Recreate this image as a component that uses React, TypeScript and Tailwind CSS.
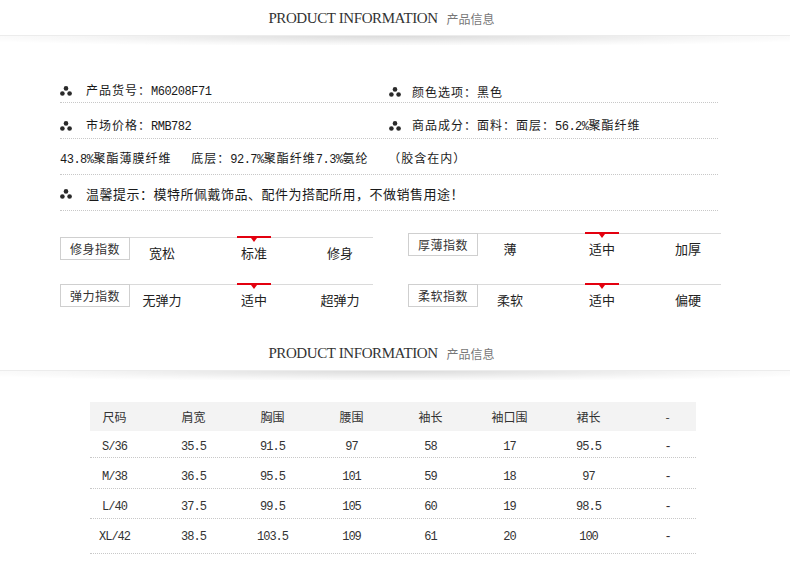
import React from "react";

const CJK = "font-['Noto_Sans_CJK_SC',sans-serif]";

function Mixed({ text, latin }: { text: string; latin: string }) {
  const parts = text.split(/([\x20-\x7E]+)/).filter((p) => p.length > 0);
  return (
    <>
      {parts.map((p, i) =>
        /^[\x20-\x7E]+$/.test(p) ? (
          <span key={i} className={latin}>
            {p}
          </span>
        ) : (
          <span key={i}>{p}</span>
        )
      )}
    </>
  );
}

function Trefoil() {
  return (
    <svg width="12" height="10" viewBox="0 0 12 10" className="shrink-0">
      <circle cx="6" cy="2.4" r="2.3" fill="#2a2a2a" />
      <circle cx="2.4" cy="7.5" r="2.3" fill="#2a2a2a" />
      <circle cx="9.6" cy="7.5" r="2.3" fill="#2a2a2a" />
    </svg>
  );
}

function Header() {
  return (
    <>
      <div className="h-[35px] flex items-center justify-center pr-[27px] pt-[2px]">
        <span className="font-['Liberation_Serif',serif] text-[15px] tracking-[-0.4px] text-[#333]">
          PRODUCT INFORMATION
        </span>
        <span className={`${CJK} ml-[9px] text-[12px] text-[#777]`}>产品信息</span>
      </div>
      <div className="h-[10px] border-t border-[#ececec] bg-[radial-gradient(ellipse_at_top,rgba(0,0,0,0.14),rgba(0,0,0,0.03)_60%,rgba(0,0,0,0)_85%)]" />
    </>
  );
}

const LATIN = "font-['Liberation_Mono',monospace] text-[12px] tracking-[-0.5px]";

function Scale({
  label,
  opts,
  rowH,
}: {
  label: string;
  opts: [string, string, string];
  rowH: string;
}) {
  return (
    <div className={`flex items-start ${rowH}`}>
      <div
        className={`${CJK} w-[70px] h-[23px] border border-[#cfcfcf] flex items-center justify-center text-[12px] tracking-[0.5px] text-[#333]`}
      >
        {label}
      </div>
      <div className="relative w-[243px] border-t border-[#dadada] flex">
        <div className="absolute top-[-2px] left-[107px] w-[34px] h-[2px] bg-[#e3000f]" />
        <div className="absolute top-[0px] left-[121px] w-0 h-0 border-l-[3px] border-r-[3px] border-t-[4px] border-l-transparent border-r-transparent border-t-[#e3000f]" />
        <div className={`${CJK} w-[64px] mt-[5px] text-center text-[13px] leading-[20px] text-[#222]`}>{opts[0]}</div>
        <div className={`${CJK} w-[120px] mt-[5px] text-center text-[13px] leading-[20px] text-[#222]`}>{opts[1]}</div>
        <div className={`${CJK} w-[52px] mt-[5px] text-center text-[13px] leading-[20px] text-[#222]`}>{opts[2]}</div>
      </div>
    </div>
  );
}

const TLATIN = "font-['Liberation_Mono',monospace] text-[12px] tracking-[-1px]";

const sizeRows: { cells: string[]; h: string; pt: string }[] = [
  { cells: ["S/36", "35.5", "91.5", "97", "58", "17", "95.5", "-"], h: "h-[27px]", pt: "pt-[8px]" },
  { cells: ["M/38", "36.5", "95.5", "101", "59", "18", "97", "-"], h: "h-[31px]", pt: "pt-[11px]" },
  { cells: ["L/40", "37.5", "99.5", "105", "60", "19", "98.5", "-"], h: "h-[30px]", pt: "pt-[10px]" },
  { cells: ["XL/42", "38.5", "103.5", "109", "61", "20", "100", "-"], h: "h-[35px]", pt: "pt-[10px]" },
];

const headCells = ["尺码", "肩宽", "胸围", "腰围", "袖长", "袖口围", "裙长", "-"];

export default function App() {
  return (
    <div className="w-[790px] h-[578px] bg-white overflow-hidden text-[#333]">
      <Header />

      {/* info rows */}
      <div className={`${CJK} mt-[22px] ml-[60px] w-[658px] text-[12px] tracking-[1px] text-[#1a1a1a]`}>
        <div className="h-[36px] flex items-end border-b border-dotted border-[#c8c8c8]">
          <div className="w-[329px] flex items-center leading-[20px]">
            <Trefoil />
            <span className="ml-[14px]">
              <Mixed text="产品货号：M60208F71" latin={LATIN} />
            </span>
          </div>
          <div className="flex items-center leading-[20px]">
            <Trefoil />
            <span className="ml-[11px]">颜色选项：黑色</span>
          </div>
        </div>
        <div className="h-[36px] flex items-end pb-[1px] border-b border-dotted border-[#c8c8c8]">
          <div className="w-[329px] flex items-center leading-[20px]">
            <Trefoil />
            <span className="ml-[14px]">
              <Mixed text="市场价格：RMB782" latin={LATIN} />
            </span>
          </div>
          <div className="flex items-center leading-[20px]">
            <Trefoil />
            <span className="ml-[11px]">
              <Mixed text="商品成分：面料：面层：56.2%聚酯纤维" latin={LATIN} />
            </span>
          </div>
        </div>
        <div className="h-[36px] flex items-end pb-[4px] border-b border-dotted border-[#c8c8c8]">
          <div className="leading-[20px] whitespace-pre">
            <Mixed text="43.8%聚酯薄膜纤维　 底层：92.7%聚酯纤维7.3%氨纶　 （胶含在内）" latin={LATIN} />
          </div>
        </div>
        <div className="h-[36px] flex items-end pb-[6px] border-b border-dotted border-[#c8c8c8]">
          <div className="flex items-center leading-[20px]">
            <Trefoil />
            <span className="ml-[14px] text-[13px] tracking-[0.5px]">
              温馨提示：模特所佩戴饰品、配件为搭配所用，不做销售用途！
            </span>
          </div>
        </div>
      </div>

      {/* index scales */}
      <div className="mt-[22px] ml-[60px] h-[102px] flex">
        <div className="pt-[4px] w-[313px]">
          <Scale label="修身指数" opts={["宽松", "标准", "修身"]} rowH="h-[47px]" />
          <Scale label="弹力指数" opts={["无弹力", "适中", "超弹力"]} rowH="h-[30px]" />
        </div>
        <div className="ml-[35px] w-[313px]">
          <Scale label="厚薄指数" opts={["薄", "适中", "加厚"]} rowH="h-[51px]" />
          <Scale label="柔软指数" opts={["柔软", "适中", "偏硬"]} rowH="h-[30px]" />
        </div>
      </div>

      <Header />

      {/* size table */}
      <div className="mt-[22px] ml-[90px] w-[606px]">
        <div className="h-[29px] bg-[#f3f3f3] flex items-center">
          <div className={`${CJK} -ml-[15px] grid grid-cols-[repeat(8,79px)] text-[12px] text-[#333]`}>
            {headCells.map((c, i) => (
              <div key={i} className="text-center">
                {c}
              </div>
            ))}
          </div>
        </div>
        {sizeRows.map((r, ri) => (
          <div key={ri} className={`${r.h} ${r.pt} border-b border-dotted border-[#c8c8c8]`}>
            <div className={`${TLATIN} -ml-[15px] grid grid-cols-[repeat(8,79px)] leading-[16px] text-[#333]`}>
              {r.cells.map((c, i) => (
                <div key={i} className="text-center">
                  {c}
                </div>
              ))}
            </div>
          </div>
        ))}
      </div>
    </div>
  );
}
